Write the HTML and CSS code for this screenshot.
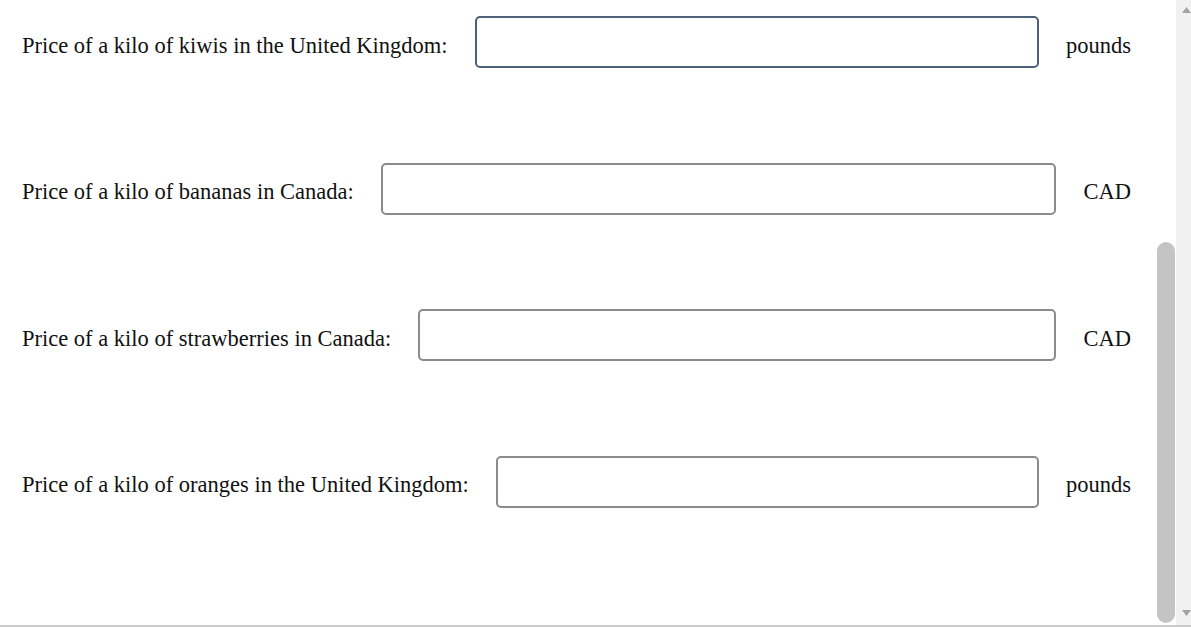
FILE: index.html
```html
<!DOCTYPE html>
<html lang="en">
<head>
  <meta charset="UTF-8">
  <meta name="viewport" content="width=device-width, initial-scale=1.0">
  <title>Fruit prices</title>
  <link rel="stylesheet" href="styles.css">
</head>
<body>
  <form class="precios">
    <div class="fila">
      <label for="kiwis-uk">Price of a kilo of kiwis in the United Kingdom:</label>
      <input type="text" id="kiwis-uk" class="campo activo" inputmode="decimal">
      <span class="moneda">pounds</span>
    </div>
    <div class="fila">
      <label for="bananas-ca">Price of a kilo of bananas in Canada:</label>
      <input type="text" id="bananas-ca" class="campo" inputmode="decimal">
      <span class="moneda">CAD</span>
    </div>
    <div class="fila">
      <label for="fresas-ca">Price of a kilo of strawberries in Canada:</label>
      <input type="text" id="fresas-ca" class="campo" inputmode="decimal">
      <span class="moneda">CAD</span>
    </div>
    <div class="fila">
      <label for="naranjas-uk">Price of a kilo of oranges in the United Kingdom:</label>
      <input type="text" id="naranjas-uk" class="campo" inputmode="decimal">
      <span class="moneda">pounds</span>
    </div>
  </form>

  <!-- barra de desplazamiento -->
  <div class="barra" aria-hidden="true">
    <svg class="flecha arriba" width="9" height="6" viewBox="0 0 9 6"><path d="M0 6 L4.5 0 L9 6 Z" fill="#a3a3a3"/></svg>
    <div class="pulgar"></div>
    <svg class="flecha abajo" width="9" height="6" viewBox="0 0 9 6"><path d="M0 0 L9 0 L4.5 6 Z" fill="#a3a3a3"/></svg>
  </div>
</body>
</html>
```

FILE: styles.css
```css
/* Estilos CSS */
html, body {
  margin: 0;
  height: 100%;
  overflow: hidden;
  background-color: #fff;
}
body {
  font-family: "Liberation Serif", "Times New Roman", serif;
  font-size: 22.5px;
  color: #111;
}
.precios {
  display: flex;
  flex-direction: column;
  gap: 94.67px;
  padding: 16px 60px 117px 22px;
  border-bottom: 2px solid #c9c9c9;
}
.fila {
  display: flex;
  align-items: center;
  height: 52px;
}
.fila label {
  white-space: nowrap;
  padding-top: 7px;
  margin-right: 27px;
}
.campo {
  flex: 1;
  height: 52px;
  box-sizing: border-box;
  border: 2px solid #8b8b8b;
  border-radius: 5px;
  background-color: #fff;
  font: inherit;
  padding: 0 10px;
  outline: none;
}
.campo.activo {
  border-color: #4f6079;
}
.moneda {
  white-space: nowrap;
  padding-top: 7px;
  margin-left: 27px;
}
/* Estilos de la barra lateral */
.barra {
  position: fixed;
  top: 0;
  right: 0;
  width: 15px;
  height: 625px;
  background-color: #f1f1f1;
}
.pulgar {
  position: absolute;
  top: 242px;
  left: -19px;
  width: 18px;
  height: 381px;
  border-radius: 9px;
  background-color: #c4c4c4;
}
.flecha {
  position: absolute;
  left: 6px;
}
.flecha.arriba {
  top: 7px;
}
.flecha.abajo {
  top: 610px;
}
```
